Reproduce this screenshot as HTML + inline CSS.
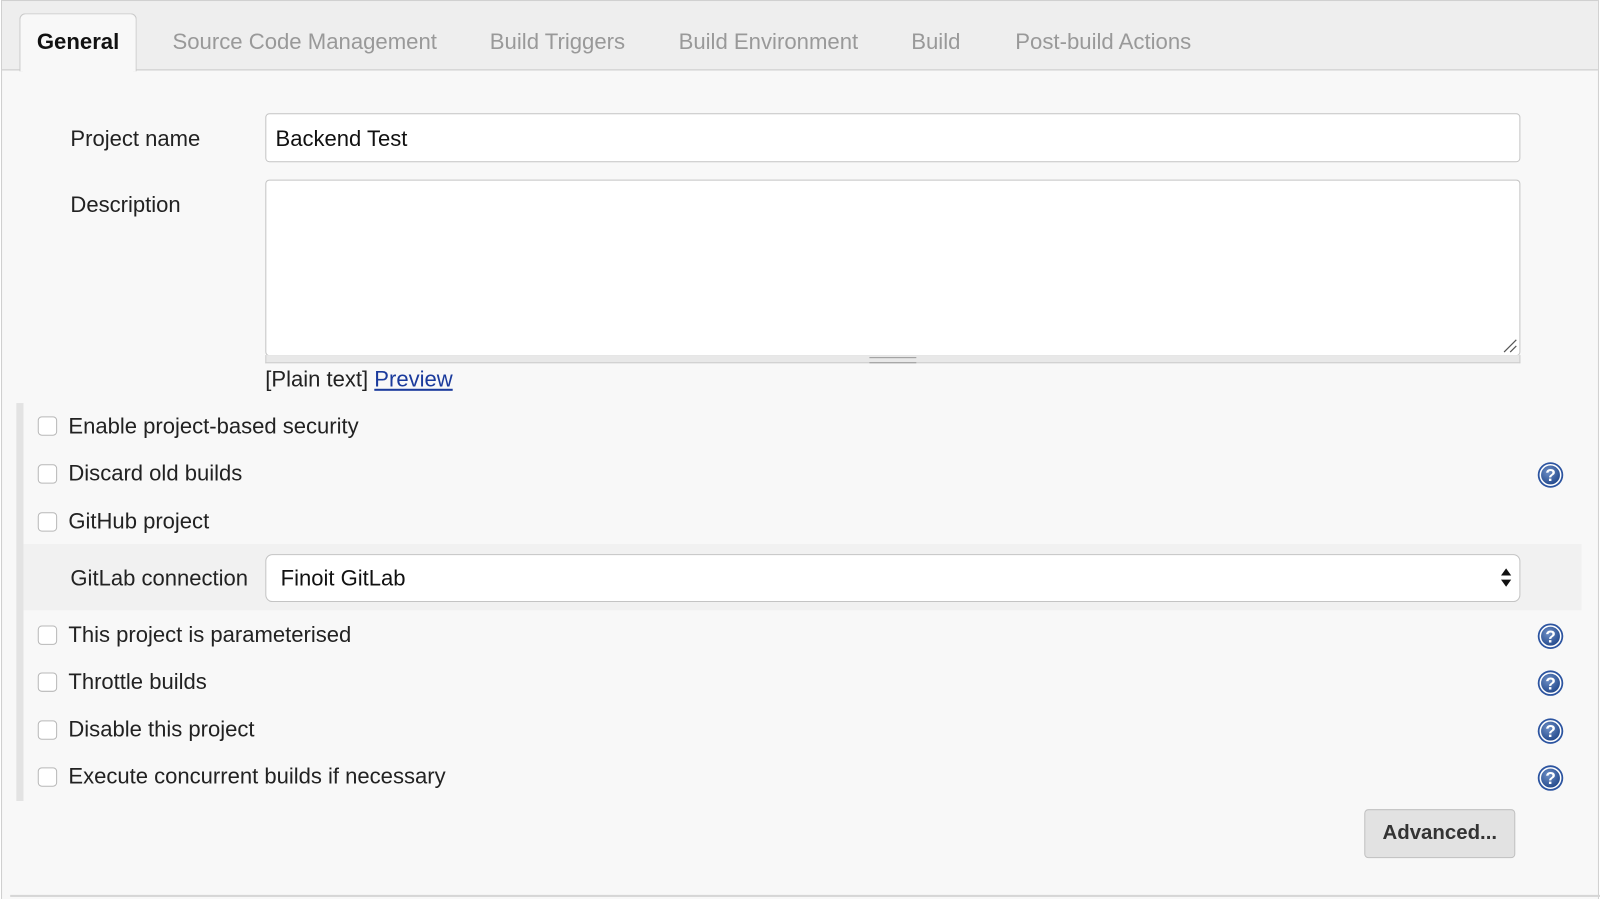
<!DOCTYPE html>
<html><head><style>
body{margin:0;width:1600px;height:899px;background:#fff;font-family:"Liberation Sans",sans-serif;overflow:hidden}
#w{position:absolute;left:0;top:0;width:1568px;height:881px;transform:scale(1.0204);transform-origin:0 0}
.a{position:absolute}
.frame{left:1px;top:0;width:1566px;height:881px;background:#f8f8f8;border-left:1px solid #d0d0d0;border-right:1px solid #d0d0d0;box-sizing:border-box}
.tabbar{left:2px;top:0;width:1564px;height:69px;background:#eeeeee;border-bottom:1px solid #c8c8c8;border-top:1px solid #d0d0d0;box-sizing:border-box}
.tab{top:28px;font-size:21.7px;color:#999}
.gen{left:19px;top:13px;width:115px;height:57px;background:#f8f8f8;border:1px solid #c8c8c8;border-bottom:none;border-radius:6px 6px 0 0;box-sizing:border-box;font-weight:bold;font-size:21.7px;color:#111;text-align:center;line-height:54px}
.lbl{font-size:21.6px;color:#222}
.inp{background:#fff;border:1px solid #c4c4c4;border-radius:4px;box-sizing:border-box}
.cb{width:19px;height:19px;border:1px solid #b8b8b8;border-radius:4px;background:#fff;box-sizing:border-box;left:37px}
.ct{left:67px;font-size:21.6px;color:#222}
.help{left:1506px;width:27px;height:27px}
</style></head><body><div id="w">
<div class="a frame"></div>
<div class="a tabbar"></div>
<div class="a gen">General</div>
<div class="a tab" style="left:169px">Source Code Management</div>
<div class="a tab" style="left:480px">Build Triggers</div>
<div class="a tab" style="left:665px">Build Environment</div>
<div class="a tab" style="left:893px">Build</div>
<div class="a tab" style="left:995px">Post-build Actions</div>

<div class="a lbl" style="left:69px;top:123px">Project name</div>
<div class="a inp" style="left:260px;top:111px;width:1230px;height:48px;font-size:21.6px;padding:11px 0 0 9px;color:#111">Backend Test</div>
<div class="a lbl" style="left:69px;top:188px">Description</div>
<div class="a inp" style="left:260px;top:176px;width:1230px;height:173px;border-radius:4px"></div>
<svg class="a" style="left:1472px;top:331px" width="16" height="16"><path d="M2 14L14 2M8 14L14 8" stroke="#555" stroke-width="1.2"/></svg>
<div class="a" style="left:260px;top:348px;width:1230px;height:8px;background:#e8e8e8;border:1px solid #ccc;border-top:none;box-sizing:border-box"></div>
<div class="a" style="left:852px;top:350px;width:46px;height:4px;border-top:1px solid #999;border-bottom:1px solid #999"></div>
<div class="a lbl" style="left:260px;top:359px">[Plain text] <span style="color:#1a3a9c;text-decoration:underline">Preview</span></div>

<div class="a" style="left:16px;top:395px;width:7px;height:390px;background:#e3e3e3"></div>
<div class="a" style="left:23px;top:533px;width:1527px;height:65px;background:#f1f1f1"></div>

<div class="a cb" style="top:408px"></div><div class="a ct" style="top:405px">Enable project-based security</div>
<div class="a cb" style="top:455px"></div><div class="a ct" style="top:451px">Discard old builds</div>
<div class="a cb" style="top:502px"></div><div class="a ct" style="top:498px">GitHub project</div>
<div class="a lbl" style="left:69px;top:554px">GitLab connection</div>
<div class="a inp" style="left:260px;top:543px;width:1230px;height:47px;border-radius:7px;font-size:21.6px;padding:10px 0 0 14px;color:#111">Finoit GitLab</div>
<svg class="a" style="left:1469px;top:555px" width="14" height="22"><path d="M2 9L7 2L12 9Z M2 13L7 20L12 13Z" fill="#111"/></svg>
<div class="a cb" style="top:613px"></div><div class="a ct" style="top:609px">This project is parameterised</div>
<div class="a cb" style="top:659px"></div><div class="a ct" style="top:655px">Throttle builds</div>
<div class="a cb" style="top:706px"></div><div class="a ct" style="top:702px">Disable this project</div>
<div class="a cb" style="top:752px"></div><div class="a ct" style="top:748px">Execute concurrent builds if necessary</div>

<svg width="0" height="0" style="position:absolute"><defs><radialGradient id="g" cx="40%" cy="35%" r="70%"><stop offset="0" stop-color="#6e8fc6"/><stop offset="1" stop-color="#1e4488"/></radialGradient></defs></svg>
<svg class="a help" style="top:452px" viewBox="0 0 27 27"><circle cx="13.5" cy="13.5" r="12.5" fill="#2c54a0"/><circle cx="13.5" cy="13.5" r="10" fill="url(#g)" stroke="#fff" stroke-width="1.5"/><text x="13.5" y="19.5" font-family="Liberation Sans" font-weight="bold" font-size="17" fill="#fff" text-anchor="middle">?</text></svg>
<svg class="a help" style="top:610px" viewBox="0 0 27 27"><circle cx="13.5" cy="13.5" r="12.5" fill="#2c54a0"/><circle cx="13.5" cy="13.5" r="10" fill="url(#g)" stroke="#fff" stroke-width="1.5"/><text x="13.5" y="19.5" font-family="Liberation Sans" font-weight="bold" font-size="17" fill="#fff" text-anchor="middle">?</text></svg>
<svg class="a help" style="top:656px" viewBox="0 0 27 27"><circle cx="13.5" cy="13.5" r="12.5" fill="#2c54a0"/><circle cx="13.5" cy="13.5" r="10" fill="url(#g)" stroke="#fff" stroke-width="1.5"/><text x="13.5" y="19.5" font-family="Liberation Sans" font-weight="bold" font-size="17" fill="#fff" text-anchor="middle">?</text></svg>
<svg class="a help" style="top:703px" viewBox="0 0 27 27"><circle cx="13.5" cy="13.5" r="12.5" fill="#2c54a0"/><circle cx="13.5" cy="13.5" r="10" fill="url(#g)" stroke="#fff" stroke-width="1.5"/><text x="13.5" y="19.5" font-family="Liberation Sans" font-weight="bold" font-size="17" fill="#fff" text-anchor="middle">?</text></svg>
<svg class="a help" style="top:749px" viewBox="0 0 27 27"><circle cx="13.5" cy="13.5" r="12.5" fill="#2c54a0"/><circle cx="13.5" cy="13.5" r="10" fill="url(#g)" stroke="#fff" stroke-width="1.5"/><text x="13.5" y="19.5" font-family="Liberation Sans" font-weight="bold" font-size="17" fill="#fff" text-anchor="middle">?</text></svg>

<div class="a" style="left:1337px;top:793px;width:148px;height:48px;background:#e2e2e2;border:1px solid #c0c0c0;border-radius:4px;box-sizing:border-box;text-align:center;line-height:45px;font-weight:bold;font-size:20px;color:#333">Advanced...</div>
<div class="a" style="left:10px;top:877px;width:1558px;height:2px;background:#d6d6d6"></div>
</div></body></html>
